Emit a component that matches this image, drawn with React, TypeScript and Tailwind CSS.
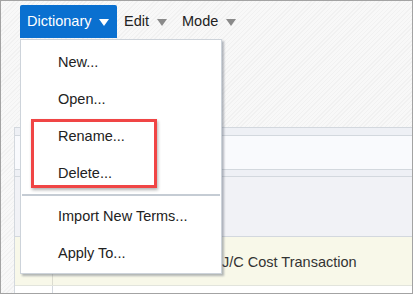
const menuItems = ["New...", "Open...", "Rename...", "Delete..."];
const moreItems = ["Import New Terms...", "Apply To..."];

const Caret = ({ color }: { color: string }) => (
  <svg width="10" height="7" viewBox="0 0 10 7" className="ml-[8px]">
    <polygon points="0,0 10,0 5,7" fill={color} />
  </svg>
);

const App = () => {
  return (
    <div
      className="relative flex h-[294px] w-[413px] flex-col overflow-hidden border border-[#a3a3a3] bg-[repeating-linear-gradient(135deg,#f1f1f1_0px,#f1f1f1_1px,#f8f8f8_1px,#f8f8f8_3px)] text-[14.5px] text-[#222]"
      style={{ fontFamily: '"Liberation Sans", Arial, sans-serif' }}
    >
      {/* toolbar */}
      <div className="flex h-[126px] items-start pl-[19px] pt-[4px]">
        <div className="flex h-[33px] w-[97px] items-center rounded-t-[2px] bg-[#0a70d0] pl-[7px] pt-[1px] text-white">
          Dictionary
          <Caret color="#ffffff" />
        </div>
        <div className="flex h-[33px] items-center pl-[7px] pt-[1px]">
          Edit
          <Caret color="#8a8a8a" />
        </div>
        <div className="flex h-[33px] items-center pl-[15px] pt-[1px]">
          Mode
          <Caret color="#8a8a8a" />
        </div>
      </div>

      {/* table behind the menu */}
      <div className="ml-[13px] flex flex-1 flex-col border-l border-[#d3d8de]">
        <div className="h-[9px] border-y border-[#d3d8de] bg-[#eef0f5]" />
        <div className="flex h-[33px] bg-[#f9fafd]">
          <div className="w-[38px] border-r border-[#d3d8de]" />
        </div>
        <div className="h-[8px] border-y border-[#d3d8de] bg-[#eef0f5]" />
        <div className="flex h-[60px] border-b border-[#d3d8de] bg-[#f1f2f6]">
          <div className="w-[38px] border-r border-[#d3d8de]" />
        </div>
        <div className="flex h-[49px] border-b border-[#e2e4dc] bg-[#f8f8e9]">
          <div className="w-[38px] border-r border-[#dcdcd0]" />
          <div className="flex items-center pl-[169px] pt-[3px] text-[#333]">J/C Cost Transaction</div>
        </div>
        <div className="flex flex-1 bg-white">
          <div className="w-[38px] border-r border-[#d3d8de]" />
        </div>
      </div>

      {/* dropdown menu */}
      <div className="absolute left-[19px] top-[38px] w-[202px] border border-[#cdd3da] bg-white pt-[4px] pb-[1px] shadow-[2px_2px_2px_rgba(90,100,115,0.45)]">
        {menuItems.map((item) => (
          <div key={item} className="flex h-[37px] items-center pl-[37px]">
            {item}
          </div>
        ))}
        <div className="mx-[1px] my-[2px] h-[2px] bg-[#c5ccd4]" />
        {moreItems.map((item) => (
          <div key={item} className="flex h-[37px] items-center pl-[37px]">
            {item}
          </div>
        ))}

        {/* highlight box */}
        <div className="absolute left-[10px] top-[79px] h-[69px] w-[126px] border-[3px] border-[#f04545] shadow-[1px_2px_3px_rgba(0,0,0,0.3)]" />
      </div>
    </div>
  );
};

export default App;
